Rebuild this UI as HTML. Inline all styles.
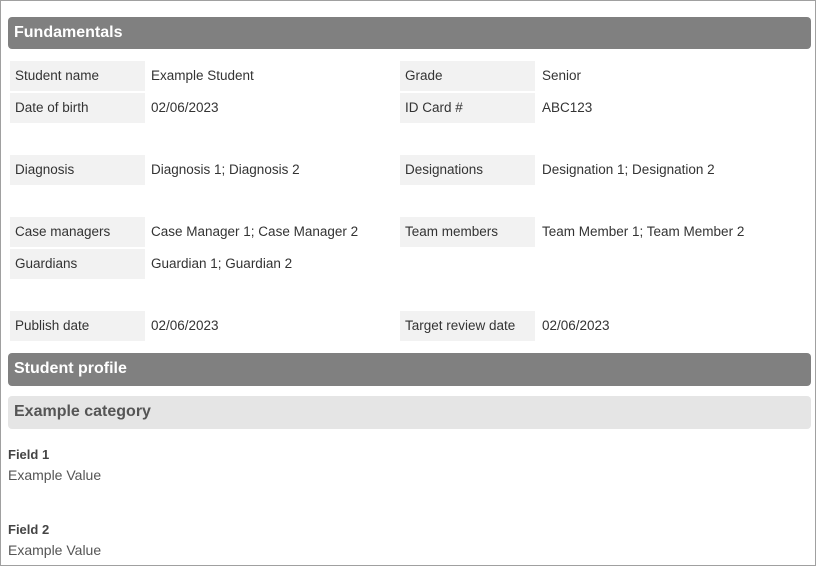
<!DOCTYPE html>
<html><head><style>
body{margin:0;width:816px;height:566px;overflow:hidden;background:#fff;font-family:"Liberation Sans",sans-serif;}
.frame{position:absolute;left:0;top:0;width:814px;height:564px;border:1px solid #a0a0a0;}
.bar{position:absolute;left:8px;width:803px;background:#808080;color:#fff;font-weight:bold;font-size:16px;border-radius:4px;box-sizing:border-box;padding-left:6px;}
.cat{position:absolute;left:8px;width:803px;background:#e5e5e5;color:#555;font-weight:bold;font-size:16px;border-radius:4px;box-sizing:border-box;padding-left:6px;}
.l{position:absolute;width:135px;height:30px;line-height:30px;background:#f2f2f2;color:#333;font-size:13.5px;box-sizing:border-box;padding-left:5px;white-space:nowrap;}
.v{position:absolute;height:30px;line-height:30px;color:#333;font-size:13.5px;white-space:nowrap;}
.fl{position:absolute;left:8px;font-size:13px;font-weight:bold;color:#444;}
.fv{position:absolute;left:8px;font-size:14px;color:#555;}
</style></head><body>
<div class="frame"></div>
<div class="bar" style="top:17px;height:32px;line-height:32px;">Fundamentals</div>

<div class="l" style="left:10px;top:61px">Student name</div><div class="v" style="left:151px;top:61px">Example Student</div>
<div class="l" style="left:400px;top:61px">Grade</div><div class="v" style="left:542px;top:61px">Senior</div>
<div class="l" style="left:10px;top:93px">Date of birth</div><div class="v" style="left:151px;top:93px">02/06/2023</div>
<div class="l" style="left:400px;top:93px">ID Card #</div><div class="v" style="left:542px;top:93px">ABC123</div>

<div class="l" style="left:10px;top:155px">Diagnosis</div><div class="v" style="left:151px;top:155px">Diagnosis 1; Diagnosis 2</div>
<div class="l" style="left:400px;top:155px">Designations</div><div class="v" style="left:542px;top:155px">Designation 1; Designation 2</div>

<div class="l" style="left:10px;top:217px">Case managers</div><div class="v" style="left:151px;top:217px">Case Manager 1; Case Manager 2</div>
<div class="l" style="left:400px;top:217px">Team members</div><div class="v" style="left:542px;top:217px">Team Member 1; Team Member 2</div>
<div class="l" style="left:10px;top:249px">Guardians</div><div class="v" style="left:151px;top:249px">Guardian 1; Guardian 2</div>

<div class="l" style="left:10px;top:311px">Publish date</div><div class="v" style="left:151px;top:311px">02/06/2023</div>
<div class="l" style="left:400px;top:311px">Target review date</div><div class="v" style="left:542px;top:311px">02/06/2023</div>

<div class="bar" style="top:353px;height:33px;line-height:32px;">Student profile</div>
<div class="cat" style="top:396px;height:33px;line-height:31px;">Example category</div>

<div class="fl" style="top:447px">Field 1</div>
<div class="fv" style="top:467px">Example Value</div>
<div class="fl" style="top:522px">Field 2</div>
<div class="fv" style="top:542px">Example Value</div>
</body></html>
